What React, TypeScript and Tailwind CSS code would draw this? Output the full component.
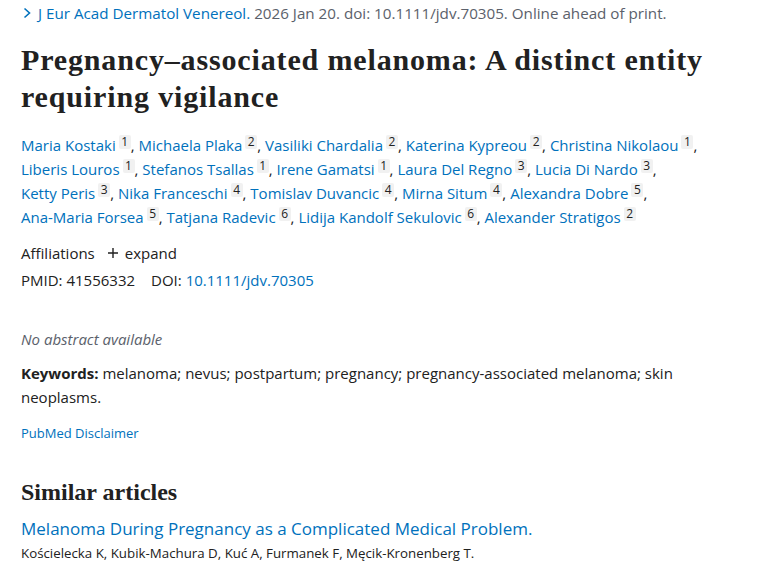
import React from "react";

const lines: [string, string][][] = [
  [
    ["Maria Kostaki", "1"],
    ["Michaela Plaka", "2"],
    ["Vasiliki Chardalia", "2"],
    ["Katerina Kypreou", "2"],
    ["Christina Nikolaou", "1"],
  ],
  [
    ["Liberis Louros", "1"],
    ["Stefanos Tsallas", "1"],
    ["Irene Gamatsi", "1"],
    ["Laura Del Regno", "3"],
    ["Lucia Di Nardo", "3"],
  ],
  [
    ["Ketty Peris", "3"],
    ["Nika Franceschi", "4"],
    ["Tomislav Duvancic", "4"],
    ["Mirna Situm", "4"],
    ["Alexandra Dobre", "5"],
  ],
  [
    ["Ana-Maria Forsea", "5"],
    ["Tatjana Radevic", "6"],
    ["Lidija Kandolf Sekulovic", "6"],
    ["Alexander Stratigos", "2"],
  ],
];

export default function App() {
  return (
    <div
      className="w-[760px] h-[570px] overflow-hidden bg-white text-[#212121] pl-[21px] pr-[40px]"
      style={{ fontFamily: '"Open Sans", "Noto Sans", sans-serif' }}
    >
      <div className="flex items-center h-[26px] text-[15.2px] text-[#0071bc]">
        <svg width="10" height="12" viewBox="0 0 10 12" className="ml-[1px] mr-[6px]">
          <path d="M2.5 1.5 L7.5 6 L2.5 10.5" fill="none" stroke="#0071bc" strokeWidth="1.6" />
        </svg>
        <span>J Eur Acad Dermatol Venereol.</span>
        <span className="text-[#5b616b]">&nbsp;2026 Jan 20. doi: 10.1111/jdv.70305. Online ahead of print.</span>
      </div>

      <h1
        className="mt-[15px] text-[30px] leading-[37px] font-bold tracking-[0.85px] text-[#212121]"
        style={{ fontFamily: '"Liberation Serif", serif' }}
      >
        Pregnancy–associated melanoma: A distinct entity requiring vigilance
      </h1>

      <div className="mt-[18px] text-[15px] leading-[24px] text-[#0071bc]">
        {lines.map((line, li) => (
          <div key={li} className="whitespace-nowrap">
            {line.map(([n, s], i) => {
              const last = li === lines.length - 1 && i === line.length - 1;
              return (
                <React.Fragment key={n}>
                  {i > 0 ? " " : null}
                  <span>{n}</span>
                  <span className="inline-block align-[5px] ml-[3px] w-[12px] text-center leading-[14px] text-[12px] bg-[#f1f1f1] text-[#212121] rounded-[2px]">
                    {s}
                  </span>
                  {!last ? <span className="text-[#212121]">,</span> : null}
                </React.Fragment>
              );
            })}
          </div>
        ))}
      </div>

      <div className="mt-[12px] text-[15px] leading-[24px] flex items-center">
        <span>Affiliations</span>
        <span className="ml-[12px] flex items-center">
          <svg width="12" height="12" viewBox="0 0 12 12" className="mr-[6px]">
            <path d="M6 1 V11 M1 6 H11" stroke="#212121" strokeWidth="1.4" />
          </svg>
          expand
        </span>
      </div>
      <div className="mt-[3px] text-[15px] leading-[24px]">
        <span>PMID: 41556332</span>
        <span className="ml-[16px]">DOI: </span>
        <span className="text-[#0071bc]">10.1111/jdv.70305</span>
      </div>

      <div className="mt-[35px] text-[15px] leading-[24px] italic text-[#5b616b]">No abstract available</div>

      <div className="mt-[10px] text-[15px] leading-[24px]">
        <b>Keywords:</b> melanoma; nevus; postpartum; pregnancy; pregnancy-associated melanoma; skin neoplasms.
      </div>

      <div className="mt-[12px] text-[13px] leading-[24px] text-[#0071bc]">PubMed Disclaimer</div>

      <h2
        className="mt-[35px] text-[24px] leading-[24px] font-bold"
        style={{ fontFamily: '"Liberation Serif", serif' }}
      >
        Similar articles
      </h2>

      <div className="mt-[13px] text-[17px] leading-[24px] text-[#0071bc]">
        Melanoma During Pregnancy as a Complicated Medical Problem.
      </div>
      <div className="text-[13.3px] leading-[24px]">
        Kościelecka K, Kubik-Machura D, Kuć A, Furmanek F, Męcik-Kronenberg T.
      </div>
    </div>
  );
}
